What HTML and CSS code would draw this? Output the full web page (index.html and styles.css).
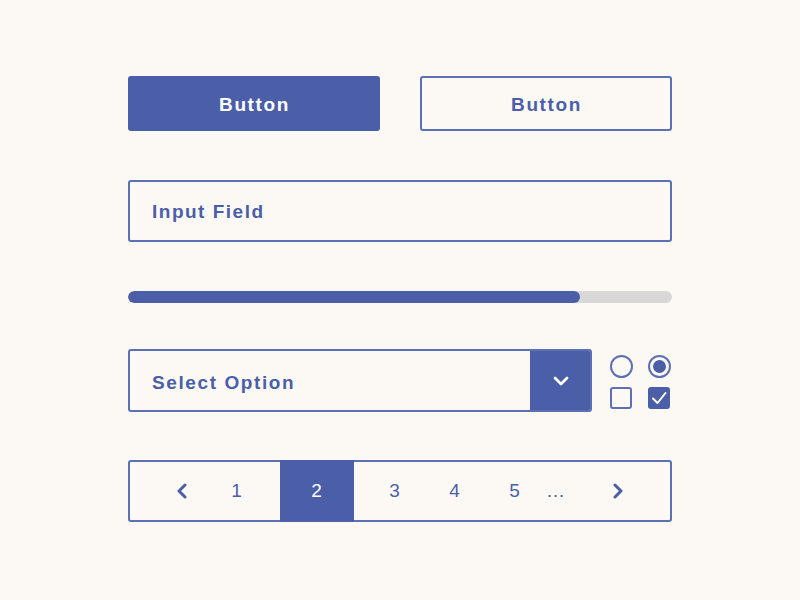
FILE: index.html
```html
<!DOCTYPE html>
<html lang="en">
<head>
<meta charset="utf-8">
<title>UI Kit</title>
<link rel="stylesheet" href="styles.css">
</head>
<body>
<main class="kit">
  <div class="row buttons">
    <button class="btn btn-solid">Button</button>
    <button class="btn btn-outline">Button</button>
  </div>

  <div class="field">Input Field</div>

  <div class="progress"><div class="progress-fill" style="width: 83.1%"></div></div>

  <div class="row select-row">
    <div class="select">
      <span class="select-label">Select Option</span>
      <span class="select-arrow">
        <svg width="16" height="10" viewBox="0 0 16 10"><path d="M2 2 L8 8 L14 2" fill="none" stroke="#fff" stroke-width="2.8" stroke-linecap="round" stroke-linejoin="round"/></svg>
      </span>
    </div>
    <div class="toggles">
      <span class="radio"></span>
      <span class="radio radio-on"><span class="radio-dot"></span></span>
      <span class="check"></span>
      <span class="check check-on">
        <svg width="22" height="22" viewBox="0 0 22 22"><path d="M5 11.5 L9.5 16 L17.5 6" fill="none" stroke="#fff" stroke-width="2" stroke-linecap="round" stroke-linejoin="round"/></svg>
      </span>
    </div>
  </div>

  <nav class="pager">
    <span class="page page-prev">
      <svg width="12" height="16" viewBox="0 0 12 16"><path d="M9 2 L3 8 L9 14" fill="none" stroke="#4a5fa8" stroke-width="3" stroke-linecap="round" stroke-linejoin="round"/></svg>
    </span>
    <span class="page page-1">1</span>
    <span class="page page-active">2</span>
    <span class="page page-3">3</span>
    <span class="page page-n">4</span>
    <span class="page page-n">5</span>
    <span class="page page-more">…</span>
    <span class="page page-next">
      <svg width="12" height="16" viewBox="0 0 12 16"><path d="M3 2 L9 8 L3 14" fill="none" stroke="#4a5fa8" stroke-width="3" stroke-linecap="round" stroke-linejoin="round"/></svg>
    </span>
  </nav>
</main>
</body>
</html>
```

FILE: styles.css
```css
html, body {
  margin: 0;
  padding: 0;
  background: #fcf9f5;
}

body {
  font-family: "Liberation Sans", Arial, sans-serif;
  color: #4a5fa8;
  height: 600px;
  overflow: hidden;
}

.kit {
  width: 544px;
  margin: 0 auto;
  padding-top: 76px;
}

.row {
  display: flex;
}

/* buttons */
.buttons {
  gap: 40px;
}

.btn {
  flex: 0 0 252px;
  height: 55px;
  border-radius: 3px;
  font-family: "Liberation Sans", Arial, sans-serif;
  font-weight: bold;
  font-size: 19px;
  letter-spacing: 1.6px;
  padding: 2px 0 0 1px;
  cursor: pointer;
}

.btn-solid {
  background: #4a5fa8;
  color: #fff;
  border: 0;
}

.btn-outline {
  background: transparent;
  color: #4a5fa8;
  border: 2px solid #5d70b3;
}

/* text input */
.field {
  margin-top: 49px;
  height: 62px;
  box-sizing: border-box;
  border: 2px solid #5d70b3;
  border-radius: 3px;
  padding: 2px 0 0 22px;
  display: flex;
  align-items: center;
  font-weight: bold;
  font-size: 19px;
  letter-spacing: 1.5px;
}

/* progress */
.progress {
  margin-top: 49px;
  height: 12px;
  border-radius: 6px;
  background: #d9d8d6;
  overflow: hidden;
}

.progress-fill {
  height: 100%;
  background: #4a5fa8;
  border-radius: 6px;
}

/* select + toggles */
.select-row {
  margin-top: 46px;
  align-items: flex-start;
}

.select {
  width: 464px;
  height: 63px;
  box-sizing: border-box;
  border: 2px solid #5d70b3;
  border-radius: 3px;
  display: flex;
  align-items: stretch;
  overflow: hidden;
}

.select-label {
  flex: 1;
  display: flex;
  align-items: center;
  padding: 4px 0 0 22px;
  font-weight: bold;
  font-size: 19px;
  letter-spacing: 1.6px;
}

.select-arrow {
  width: 62px;
  margin: -2px -2px -2px 0;
  background: #4a5fa8;
  display: flex;
  align-items: center;
  justify-content: center;
}

.toggles {
  margin-left: 18px;
  margin-top: 6px;
  display: grid;
  grid-template-columns: 23px 23px;
  column-gap: 15px;
  row-gap: 10px;
}

.radio {
  width: 23px;
  height: 23px;
  box-sizing: border-box;
  border: 2px solid #5d70b3;
  border-radius: 50%;
  display: flex;
  align-items: center;
  justify-content: center;
}

.radio-dot {
  width: 13px;
  height: 13px;
  border-radius: 50%;
  background: #4a5fa8;
}

.check {
  width: 22px;
  height: 22px;
  box-sizing: border-box;
  border: 2px solid #5d70b3;
  border-radius: 3px;
  margin-top: -1px;
}

.check-on {
  background: #4a5fa8;
  border: 0;
}

.check-on svg {
  display: block;
}

/* pagination */
.pager {
  margin-top: 48px;
  height: 62px;
  box-sizing: border-box;
  border: 2px solid #5d70b3;
  border-radius: 3px;
  display: flex;
  align-items: stretch;
  font-size: 19px;
}

.page {
  width: 40px;
  display: flex;
  align-items: center;
  justify-content: center;
}

.page-prev { margin-left: 31.5px; }
.page-1 { margin-left: 15px; }

.page-active {
  width: 74px;
  margin: -2px 0 -2px 23px;
  background: #4a5fa8;
  color: #fff;
}

.page-3 { margin-left: 21px; }
.page-n { margin-left: 20px; }

.page-more {
  width: 34px;
  margin-left: 4px;
}

.page-next { margin-left: 25px; }
```
